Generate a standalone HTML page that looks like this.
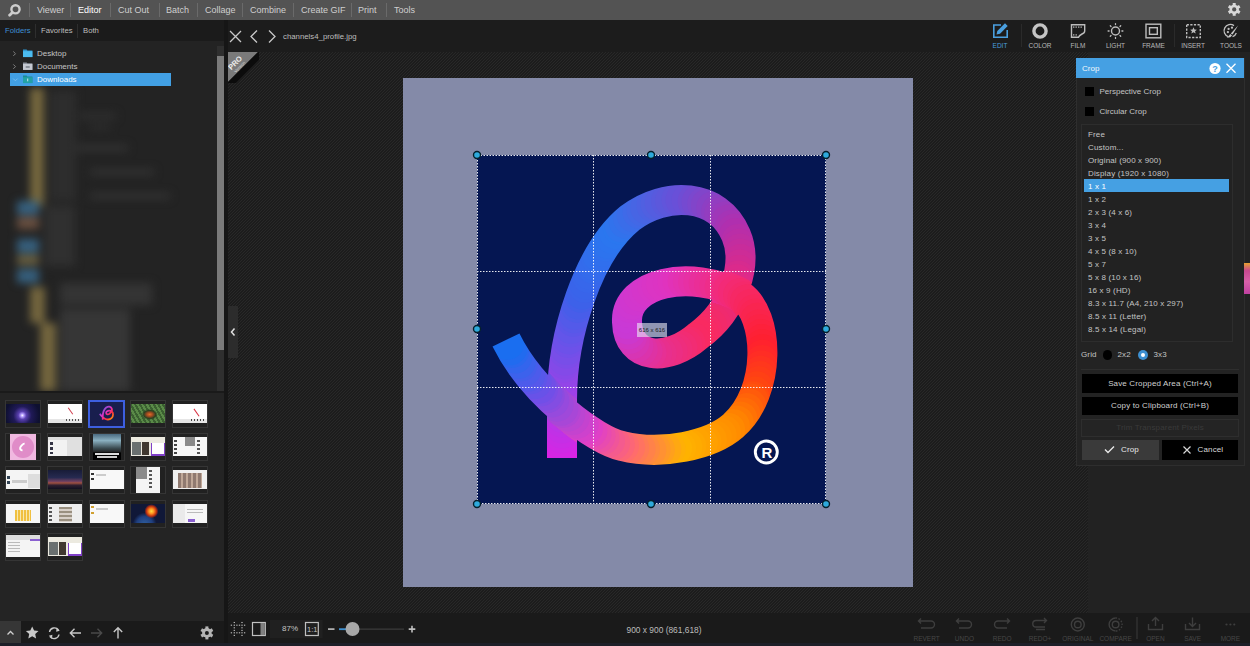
<!DOCTYPE html>
<html><head><meta charset="utf-8">
<style>
*{margin:0;padding:0;box-sizing:border-box}
html,body{width:1250px;height:646px;overflow:hidden;background:#1c1c1c;font-family:"Liberation Sans",sans-serif;}
.a{position:absolute}
.t{position:absolute;white-space:nowrap;line-height:1}
#menubar{left:0;top:0;width:1250px;height:20px;background:#535353}
.mi{font-size:9px;color:#cfcfcf;top:6px}
.sep{position:absolute;top:3px;width:1px;height:14px;background:#6a6a6a}
#tabs{left:0;top:20px;width:224px;height:21px;background:#1b1b1b}
#tree{left:0;top:41px;width:224px;height:351px;background:#232323}
#thumbs{left:0;top:393px;width:224px;height:228px;background:#242424}
#lbar{left:0;top:621px;width:224px;height:25px;background:#1a1a1a}
#gap{left:224px;top:20px;width:4px;height:626px;background:#161616}
#hdr{left:228px;top:20px;width:1022px;height:32px;background:#1c1c1c}
#canvas{left:228px;top:52px;width:860px;height:561px;background:#1c1c1c}
#rpanel{left:1088px;top:52px;width:162px;height:561px;background:#222}
#bbar{left:228px;top:613px;width:1022px;height:30px;background:#1a1a1a}
#bstrip{left:0;top:643px;width:1250px;height:3px;background:#1d1f28}
.cell{position:absolute;width:36px;height:28px;background:#2a2a2a;border:1px solid #303030}
.lbl{font-size:6.5px;color:#b8b8b8;top:43px;transform:translateX(-50%)}
.blbl{font-size:6.5px;color:#464646;top:636px;transform:translateX(-50%)}
#crop{left:1076px;top:58px;width:169px;height:408px;background:#232323;border:1px solid #303030}
.ci{font-size:8px;color:#c4c4c4;letter-spacing:0.15px}
</style></head><body>
<div id="menubar" class="a"></div>
<div id="tabs" class="a"></div>
<div id="tree" class="a"></div>
<div id="thumbs" class="a"></div>
<div id="lbar" class="a"></div>
<div id="gap" class="a"></div>
<div id="hdr" class="a"></div>
<div id="canvas" class="a"><svg width="860" height="561" style="display:block"><defs><pattern id="stp" patternUnits="userSpaceOnUse" width="3" height="3"><rect x="0" y="2" width="1" height="1" fill="#282828"/><rect x="1" y="1" width="1" height="1" fill="#282828"/><rect x="2" y="0" width="1" height="1" fill="#282828"/></pattern></defs><rect width="860" height="561" fill="url(#stp)" shape-rendering="crispEdges"/></svg></div>
<div id="rpanel" class="a"></div>
<div id="bbar" class="a"></div>


<!-- header -->
<svg class="a" style="left:229px;top:30.3px" width="50" height="14" viewBox="0 0 50 14">
 <g stroke="#c8c8c8" stroke-width="1.3" fill="none">
  <path d="M1 1 L12 12 M12 1 L1 12"/>
  <path d="M28 0.5 L22 6.5 L28 12.5"/>
  <path d="M40 0.5 L46 6.5 L40 12.5"/>
 </g>
</svg>
<div class="t" style="left:283px;top:33px;font-size:7.8px;color:#bdbdbd">channels4_profile.jpg</div>
<!-- tool icons -->
<svg class="a" style="left:985px;top:20px" width="265" height="32" viewBox="985 20 265 32">
 <g fill="none" stroke="#4a9fdf" stroke-width="1.6">
  <path d="M1001 25 H993.8 V37.2 H1007.2 V30"/>
 </g>
 <path d="M996.5 34.5 L997.3 31 L1005 23.3 L1007.7 26 L1000 33.7 Z" fill="#4a9fdf"/>
 <rect x="1021" y="24" width="1" height="23" fill="#2a2a2a"/>
 <circle cx="1040" cy="31" r="6.1" fill="none" stroke="#c4c4c4" stroke-width="3.4"/>
 <g fill="none" stroke="#bdbdbd" stroke-width="1.4">
  <path d="M1071.5 24.7 H1084.7 V31 Q1084.7 33 1082 34 Q1079 35.5 1078.5 37.3 H1071.5 Z"/>
 </g>
 <rect x="1146" y="24.2" width="14.8" height="13.6" fill="none" stroke="#bdbdbd" stroke-width="1.4"/>
 <rect x="1149.5" y="27.7" width="7.8" height="6.6" fill="none" stroke="#bdbdbd" stroke-width="1.4"/>
 <g fill="#bdbdbd">
  <rect x="1073" y="26.5" width="1.4" height="1.2"/><rect x="1075.5" y="26.5" width="1.4" height="1.2"/><rect x="1078" y="26.5" width="1.4" height="1.2"/><rect x="1080.5" y="26.5" width="1.4" height="1.2"/>
  <rect x="1073" y="34.3" width="1.4" height="1.2"/><rect x="1075.5" y="34.3" width="1.4" height="1.2"/>
 </g>
 <circle cx="1115.5" cy="31" r="4" fill="none" stroke="#bdbdbd" stroke-width="1.4"/>
 <g stroke="#bdbdbd" stroke-width="1.3" stroke-linecap="round">
  <path d="M1115.5 23.6 v1 M1115.5 37.4 v1 M1108.1 31 h1 M1121.9 31 h1 M1110.3 25.8 l0.7 0.7 M1120 35.5 l0.7 0.7 M1120.7 25.8 l-0.7 0.7 M1111 35.5 l-0.7 0.7"/>
 </g>
 <rect x="1174" y="24" width="1" height="23" fill="#2a2a2a"/>
 <rect x="1186.7" y="24.7" width="13.6" height="12.8" fill="none" stroke="#bdbdbd" stroke-width="1.4" stroke-dasharray="2.2 1.4"/>
 <path d="M1193.5 27.3 l1 2.3 2.4 0.1 -1.9 1.5 0.7 2.4 -2.2 -1.4 -2.2 1.4 0.7 -2.4 -1.9 -1.5 2.4 -0.1z" fill="#bdbdbd"/>
 <path d="M1234 25.64 A6.3 6.3 0 1 0 1228.25 36.72" fill="none" stroke="#c0c0c0" stroke-width="1.3"/>
 <path d="M1236.3 32.95 A6.3 6.3 0 0 1 1232.55 36.72" fill="none" stroke="#c0c0c0" stroke-width="1.3"/>
 <g fill="#c0c0c0"><circle cx="1228.6" cy="28.9" r="1.15"/><circle cx="1232" cy="27.7" r="1.15"/><circle cx="1227.9" cy="32.1" r="1.15"/></g>
 <path d="M1238.3 25.3 L1232.6 34.6 L1230.8 33.4 Z" fill="#c8c8c8"/>
 <path d="M1230.2 34 L1232 35.3 Q1231 37.8 1226.8 37.8 Q1228.6 36.6 1230.2 34 Z" fill="#c8c8c8"/>
</svg>
<div class="t lbl" style="left:1000px;color:#4a9fdf">EDIT</div>
<div class="t lbl" style="left:1040px">COLOR</div>
<div class="t lbl" style="left:1078px">FILM</div>
<div class="t lbl" style="left:1115.5px">LIGHT</div>
<div class="t lbl" style="left:1153.5px">FRAME</div>
<div class="t lbl" style="left:1193px">INSERT</div>
<div class="t lbl" style="left:1231px">TOOLS</div>
<!-- gear top right -->
<svg class="a" style="left:1224px;top:0px" width="22" height="20" viewBox="1224 0 22 20"><g transform="translate(1234.2 9.4)" fill="#d8d8d8"><circle r="4.7"/><rect x="-1.5" y="-6.4" width="3" height="3.4000000000000004" transform="rotate(0)"/><rect x="-1.5" y="-6.4" width="3" height="3.4000000000000004" transform="rotate(60)"/><rect x="-1.5" y="-6.4" width="3" height="3.4000000000000004" transform="rotate(120)"/><rect x="-1.5" y="-6.4" width="3" height="3.4000000000000004" transform="rotate(180)"/><rect x="-1.5" y="-6.4" width="3" height="3.4000000000000004" transform="rotate(240)"/><rect x="-1.5" y="-6.4" width="3" height="3.4000000000000004" transform="rotate(300)"/><circle r="2.1" fill="#535353"/></g></svg>


<!-- crop panel -->
<div class="a" style="left:1076px;top:58px;width:169px;height:408px;background:#232323;border:1px solid #2e2e2e;border-top:none"></div>
<div class="a" style="left:1076px;top:58px;width:168px;height:20px;background:#45a0e3"></div>
<div class="t" style="left:1082px;top:65px;font-size:8px;color:#f4f8fc">Crop</div>
<svg class="a" style="left:1208px;top:62px" width="30" height="13" viewBox="0 0 30 13">
 <circle cx="7" cy="6.5" r="5.6" fill="#fff"/>
 <text x="7" y="10" font-family="Liberation Sans" font-weight="bold" font-size="9" fill="#45a0e3" text-anchor="middle">?</text>
 <path d="M18.5 1.8 L27.5 10.8 M27.5 1.8 L18.5 10.8" stroke="#fff" stroke-width="1.3"/>
</svg>
<div class="a" style="left:1085px;top:87px;width:9px;height:9px;background:#000"></div>
<div class="t ci" style="left:1099.5px;top:87.5px;letter-spacing:0">Perspective Crop</div>
<div class="a" style="left:1085px;top:107px;width:9px;height:9px;background:#000"></div>
<div class="t ci" style="left:1099.5px;top:107.5px;letter-spacing:0">Circular Crop</div>
<div class="a" style="left:1081px;top:124px;width:152px;height:218px;border:1px solid #2d2d2d;background:#222"></div>
<div class="a" style="left:1084px;top:179px;width:145px;height:13px;background:#45a0e3"></div>
<div class="t ci" style="left:1088px;top:130.7px;color:#c4c4c4">Free</div>
<div class="t ci" style="left:1088px;top:143.7px;color:#c4c4c4">Custom...</div>
<div class="t ci" style="left:1088px;top:156.7px;color:#c4c4c4">Original (900 x 900)</div>
<div class="t ci" style="left:1088px;top:169.7px;color:#c4c4c4">Display (1920 x 1080)</div>
<div class="t ci" style="left:1088px;top:182.7px;color:#ffffff">1 x 1</div>
<div class="t ci" style="left:1088px;top:195.7px;color:#c4c4c4">1 x 2</div>
<div class="t ci" style="left:1088px;top:208.7px;color:#c4c4c4">2 x 3 (4 x 6)</div>
<div class="t ci" style="left:1088px;top:221.7px;color:#c4c4c4">3 x 4</div>
<div class="t ci" style="left:1088px;top:234.7px;color:#c4c4c4">3 x 5</div>
<div class="t ci" style="left:1088px;top:247.7px;color:#c4c4c4">4 x 5 (8 x 10)</div>
<div class="t ci" style="left:1088px;top:260.7px;color:#c4c4c4">5 x 7</div>
<div class="t ci" style="left:1088px;top:273.7px;color:#c4c4c4">5 x 8 (10 x 16)</div>
<div class="t ci" style="left:1088px;top:286.7px;color:#c4c4c4">16 x 9 (HD)</div>
<div class="t ci" style="left:1088px;top:299.7px;color:#c4c4c4">8.3 x 11.7 (A4, 210 x 297)</div>
<div class="t ci" style="left:1088px;top:312.7px;color:#c4c4c4">8.5 x 11 (Letter)</div>
<div class="t ci" style="left:1088px;top:325.7px;color:#c4c4c4">8.5 x 14 (Legal)</div>

<div class="t ci" style="left:1081px;top:351px">Grid</div>
<div class="a" style="left:1102.5px;top:350px;width:9.5px;height:9.5px;border-radius:50%;background:#000"></div>
<div class="t ci" style="left:1117.5px;top:351px">2x2</div>
<div class="a" style="left:1138px;top:350px;width:10px;height:10px;border-radius:50%;background:#3d8fd0"></div>
<div class="a" style="left:1141px;top:353px;width:4px;height:4px;border-radius:50%;background:#fff"></div>
<div class="t ci" style="left:1153.5px;top:351px">3x3</div>
<div class="a" style="left:1081px;top:369px;width:158px;height:1px;background:#2e2e2e"></div>
<div class="a" style="left:1082px;top:374px;width:156px;height:19px;background:#000"></div>
<div class="t ci" style="left:1160px;top:380px;transform:translateX(-50%);color:#d0d0d0">Save Cropped Area (Ctrl+A)</div>
<div class="a" style="left:1082px;top:396.5px;width:156px;height:18px;background:#000"></div>
<div class="t ci" style="left:1160px;top:402px;transform:translateX(-50%);color:#d0d0d0">Copy to Clipboard (Ctrl+B)</div>
<div class="a" style="left:1081px;top:418.5px;width:158px;height:18.5px;background:#242424;border:1px solid #2e2e2e"></div>
<div class="t ci" style="left:1160px;top:424px;transform:translateX(-50%);color:#3a3a3a">Trim Transparent Pixels</div>
<div class="a" style="left:1082px;top:440px;width:77px;height:19.5px;background:#3a3a3a"></div>
<svg class="a" style="left:1104px;top:445px" width="11" height="9"><path d="M1 4.5 L4 7.5 L10 1.5" fill="none" stroke="#e8e8e8" stroke-width="1.4"/></svg>
<div class="t ci" style="left:1121px;top:446px;color:#e8e8e8">Crop</div>
<div class="a" style="left:1162px;top:440px;width:76px;height:19.5px;background:#000"></div>
<svg class="a" style="left:1182px;top:445px" width="10" height="10"><path d="M1.5 1.5 L8.5 8.5 M8.5 1.5 L1.5 8.5" fill="none" stroke="#d8d8d8" stroke-width="1.2"/></svg>
<div class="t ci" style="left:1197.5px;top:446px;color:#d8d8d8">Cancel</div>
<div class="a" style="left:1244px;top:263px;width:6px;height:31px;background:linear-gradient(180deg,#e8a030 0%,#c84890 25%,#d860a8 60%,#c040a0 100%)"></div>

<!-- thumbnails -->
<div class="a" style="left:5px;top:400px;width:36px;height:28px;background:#212121;box-shadow:inset 0 0 0 1px #353535"><div class="a" style="left:1px;top:4px;width:34px;height:19px;background:radial-gradient(circle at 48% 60%,#ffffff 0px,#b8a0ff 1.5px,#5a40b0 4px,#201a58 9px,#0e1030 17px)"></div></div>
<div class="a" style="left:47px;top:400px;width:36px;height:28px;background:#212121;box-shadow:inset 0 0 0 1px #353535"><div class="a" style="left:1px;top:4px;width:34px;height:19px;background:linear-gradient(180deg,#fff 0%,#fff 80%,#e6e6e6 80%)"><div class="a" style="left:22px;top:3px;width:1px;height:8px;background:#d04050;transform:rotate(-35deg)"></div><div class="a" style="left:18px;top:15px;width:14px;height:1.5px;background:repeating-linear-gradient(90deg,#555 0 1.5px,transparent 1.5px 3px)"></div></div></div>
<div class="a" style="left:89px;top:400px;width:36px;height:28px;background:#212121;box-shadow:inset 0 0 0 1px #353535"><div class="a" style="left:-0.7px;top:-0.1px;width:37px;height:28px;border:2.8px solid #3d5fe0;background:#181e4e"></div><svg class="a" style="left:9px;top:4px" width="18" height="18" viewBox="470 150 350 350"><defs><linearGradient id="tg" x1="0" y1="0" x2="1" y2="1"><stop offset="0" stop-color="#3070f0"/><stop offset="0.45" stop-color="#e030c0"/><stop offset="0.7" stop-color="#ff3040"/><stop offset="1" stop-color="#ffb000"/></linearGradient></defs><path d="M562 458 L562 400 C562 335 588 252 630 218 C665.7 191 718 192.5 736 235 C748 263 735 309 698 336 C668 362 628 360 627 322 C625 283 690 268 740 295 C770 315 772 392 733 426 C711 445 662 456 622 446 C595 439 528 380 506 340" fill="none" stroke="url(#tg)" stroke-width="34"/></svg></div>
<div class="a" style="left:130px;top:400px;width:36px;height:28px;background:#212121;box-shadow:inset 0 0 0 1px #353535"><div class="a" style="left:1px;top:4px;width:34px;height:19px;background:radial-gradient(ellipse 9px 6px at 55% 55%,#e07028 0px,#a04a20 3px,#2a4020 6px,transparent 8px),repeating-linear-gradient(60deg,#3a6030 0 2px,#5a8a48 2px 4px)"></div></div>
<div class="a" style="left:172px;top:400px;width:36px;height:28px;background:#212121;box-shadow:inset 0 0 0 1px #353535"><div class="a" style="left:1px;top:4px;width:34px;height:19px;background:linear-gradient(180deg,#fff 0%,#fff 80%,#e6e6e6 80%)"><div class="a" style="left:23px;top:4px;width:1.2px;height:9px;background:#d83040;transform:rotate(-35deg)"></div><div class="a" style="left:18px;top:15px;width:15px;height:1.5px;background:repeating-linear-gradient(90deg,#444 0 1.5px,transparent 1.5px 3px)"></div></div></div>
<div class="a" style="left:5px;top:433px;width:36px;height:28px;background:#212121;box-shadow:inset 0 0 0 1px #353535"><div class="a" style="left:5px;top:1px;width:26px;height:26px;background:#f0b8e0"></div><div class="a" style="left:7px;top:3px;width:22px;height:22px;border-radius:50%;background:#e08cc8"></div><div class="a" style="left:15px;top:9px;width:7px;height:10px;border-radius:50%;border:2px solid #fff;border-right-color:transparent;border-top-color:transparent;transform:rotate(45deg)"></div></div>
<div class="a" style="left:47px;top:433px;width:36px;height:28px;background:#212121;box-shadow:inset 0 0 0 1px #353535"><div class="a" style="left:1px;top:4px;width:34px;height:19px;background:linear-gradient(90deg,#f2f2f2 0%,#f2f2f2 55%,#e0e0e0 55%)"><div class="a" style="left:2px;top:5px;width:3px;height:12px;background:repeating-linear-gradient(180deg,#334 0 3px,transparent 3px 5px)"></div><div class="a" style="left:0;top:0;width:34px;height:3px;background:#ddd"></div></div></div>
<div class="a" style="left:89px;top:433px;width:36px;height:28px;background:#212121;box-shadow:inset 0 0 0 1px #353535"><div class="a" style="left:4px;top:1px;width:28px;height:26px;background:linear-gradient(180deg,#4a6a80 0%,#8ab0c0 25%,#3a4a50 55%,#222 70%,#000 72%)"></div><div class="a" style="left:6px;top:20px;width:24px;height:1.5px;background:#ddd"></div><div class="a" style="left:8px;top:23px;width:20px;height:1.5px;background:#ccc"></div></div>
<div class="a" style="left:130px;top:433px;width:36px;height:28px;background:#212121;box-shadow:inset 0 0 0 1px #353535"><div class="a" style="left:1px;top:4px;width:34px;height:19px;background:#eceae0"><div class="a" style="left:1px;top:5px;width:9px;height:13px;background:#6a7070"></div><div class="a" style="left:11px;top:5px;width:7px;height:13px;background:#403830"></div><div class="a" style="left:20px;top:6px;width:14px;height:13px;background:#8040c8"></div><div class="a" style="left:21px;top:6px;width:12px;height:11px;background:#fff"></div></div></div>
<div class="a" style="left:172px;top:433px;width:36px;height:28px;background:#212121;box-shadow:inset 0 0 0 1px #353535"><div class="a" style="left:1px;top:4px;width:34px;height:19px;background:#f6f6f6"><div class="a" style="left:12px;top:0;width:10px;height:9px;background:#8a8a8a"></div><div class="a" style="left:1px;top:3px;width:3px;height:14px;background:repeating-linear-gradient(180deg,#444 0 2px,transparent 2px 4px)"></div><div class="a" style="left:24px;top:3px;width:3px;height:14px;background:repeating-linear-gradient(180deg,#555 0 2px,transparent 2px 4px)"></div></div></div>
<div class="a" style="left:5px;top:466px;width:36px;height:28px;background:#212121;box-shadow:inset 0 0 0 1px #353535"><div class="a" style="left:1px;top:4px;width:34px;height:19px;background:#f4f4f4"><div class="a" style="left:22px;top:4px;width:12px;height:14px;background:#ddd"></div><div class="a" style="left:1px;top:6px;width:3px;height:10px;background:repeating-linear-gradient(180deg,#345 0 3px,transparent 3px 5px)"></div><div class="a" style="left:6px;top:10px;width:15px;height:3px;background:#ccc"></div></div></div>
<div class="a" style="left:47px;top:466px;width:36px;height:28px;background:#212121;box-shadow:inset 0 0 0 1px #353535"><div class="a" style="left:1px;top:4px;width:34px;height:19px;background:linear-gradient(180deg,#181c38 0%,#262a50 40%,#704060 60%,#a05040 68%,#302030 80%,#101020 100%)"></div></div>
<div class="a" style="left:89px;top:466px;width:36px;height:28px;background:#212121;box-shadow:inset 0 0 0 1px #353535"><div class="a" style="left:1px;top:4px;width:34px;height:19px;background:#f8f8f8"><div class="a" style="left:1px;top:3px;width:3px;height:10px;background:repeating-linear-gradient(180deg,#333 0 2.5px,transparent 2.5px 5px)"></div><div class="a" style="left:6px;top:4px;width:10px;height:2px;background:#ccc"></div></div></div>
<div class="a" style="left:130px;top:466px;width:36px;height:28px;background:#212121;box-shadow:inset 0 0 0 1px #353535"><div class="a" style="left:6px;top:1px;width:24px;height:26px;background:#f4f4f4"></div><div class="a" style="left:6px;top:1px;width:11px;height:12px;background:#8a8a8a"></div><div class="a" style="left:19px;top:4px;width:3px;height:20px;background:repeating-linear-gradient(180deg,#555 0 2px,transparent 2px 4px)"></div></div>
<div class="a" style="left:172px;top:466px;width:36px;height:28px;background:#212121;box-shadow:inset 0 0 0 1px #353535"><div class="a" style="left:1px;top:4px;width:34px;height:19px;background:#f0f0f0"><div class="a" style="left:5px;top:3px;width:24px;height:15px;background:repeating-linear-gradient(90deg,#907a70 0 3px,#c0a898 3px 5px)"></div></div></div>
<div class="a" style="left:5px;top:499.5px;width:36px;height:28px;background:#212121;box-shadow:inset 0 0 0 1px #353535"><div class="a" style="left:1px;top:4px;width:34px;height:19px;background:#f6f6f6"><div class="a" style="left:9px;top:6px;width:16px;height:11px;background:repeating-linear-gradient(90deg,#f0c040 0 2px,#f8e8b0 2px 3px)"></div></div></div>
<div class="a" style="left:47px;top:499.5px;width:36px;height:28px;background:#212121;box-shadow:inset 0 0 0 1px #353535"><div class="a" style="left:1px;top:4px;width:34px;height:19px;background:#eeeeee"><div class="a" style="left:11px;top:3px;width:13px;height:15px;background:repeating-linear-gradient(180deg,#9a9080 0 2px,#d8d0c8 2px 4px)"></div><div class="a" style="left:1px;top:3px;width:3px;height:14px;background:repeating-linear-gradient(180deg,#555 0 2px,transparent 2px 4px)"></div></div></div>
<div class="a" style="left:89px;top:499.5px;width:36px;height:28px;background:#212121;box-shadow:inset 0 0 0 1px #353535"><div class="a" style="left:1px;top:4px;width:34px;height:19px;background:#f8f8f8"><div class="a" style="left:1px;top:2px;width:3px;height:12px;background:repeating-linear-gradient(180deg,#d0a030 0 2.5px,transparent 2.5px 6px)"></div><div class="a" style="left:6px;top:4px;width:12px;height:2px;background:#ccc"></div></div></div>
<div class="a" style="left:130px;top:499.5px;width:36px;height:28px;background:#212121;box-shadow:inset 0 0 0 1px #353535"><div class="a" style="left:1px;top:4px;width:34px;height:19px;background:radial-gradient(circle at 60% 38%,#ffe040 0px,#ff9020 2.5px,#c03010 5px,transparent 7px),radial-gradient(ellipse at 40% 110%,#3060a0 0px,#204080 8px,transparent 12px),#101838"></div></div>
<div class="a" style="left:172px;top:499.5px;width:36px;height:28px;background:#212121;box-shadow:inset 0 0 0 1px #353535"><div class="a" style="left:1px;top:4px;width:34px;height:19px;background:#f6f6f6"><div class="a" style="left:0;top:0;width:12px;height:19px;background:#eaeaea"></div><div class="a" style="left:15px;top:15px;width:7px;height:3px;background:#8a60d0"></div><div class="a" style="left:14px;top:5px;width:16px;height:6px;background:repeating-linear-gradient(180deg,#bbb 0 1px,transparent 1px 3px)"></div></div></div>
<div class="a" style="left:5px;top:532.5px;width:36px;height:28px;background:#212121;box-shadow:inset 0 0 0 1px #353535"><div class="a" style="left:1px;top:4px;width:34px;height:19px;background:#f4f4f4;top:2px;height:22px"><div class="a" style="left:0;top:0;width:34px;height:5px;background:#ddd"></div><div class="a" style="left:24px;top:4px;width:10px;height:2px;background:#8a60d0"></div><div class="a" style="left:2px;top:7px;width:12px;height:10px;background:repeating-linear-gradient(180deg,#bbb 0 1px,transparent 1px 3px)"></div></div></div>
<div class="a" style="left:47px;top:532.5px;width:36px;height:28px;background:#212121;box-shadow:inset 0 0 0 1px #353535"><div class="a" style="left:1px;top:4px;width:34px;height:19px;background:#eceae0"><div class="a" style="left:1px;top:5px;width:9px;height:13px;background:#6a7070"></div><div class="a" style="left:11px;top:5px;width:7px;height:13px;background:#403830"></div><div class="a" style="left:20px;top:6px;width:14px;height:13px;background:#8040c8"></div><div class="a" style="left:21px;top:6px;width:12px;height:11px;background:#fff"></div></div></div>


<!-- left bottom toolbar -->
<div class="a" style="left:0;top:621px;width:21px;height:25px;background:#363636"></div>
<svg class="a" style="left:0;top:621px" width="224" height="25" viewBox="0 621 224 25">
 <path d="M7.5 634.5 L10.5 631.5 L13.5 634.5" fill="none" stroke="#cfcfcf" stroke-width="1.3"/>
 <path d="M32.2 626.5 L34.1 630.6 L38.5 631 L35.2 634 L36.1 638.4 L32.2 636.2 L28.3 638.4 L29.2 634 L25.9 631 L30.3 630.6 Z" fill="#c8c8c8"/>
 <g fill="none" stroke="#c8c8c8" stroke-width="1.4">
  <path d="M49.5 632 A5 5 0 0 1 58.5 630"/><path d="M59 634.5 A5 5 0 0 1 50 636.5"/>
 </g>
 <path d="M56.5 628 L59.8 630.8 L56.2 631.8 Z M52 638.5 L48.8 635.8 L52.4 634.8 Z" fill="#c8c8c8"/>
 <path d="M81 633 H70.5 M74.5 628.8 L70.3 633 L74.5 637.2" fill="none" stroke="#c8c8c8" stroke-width="1.4"/>
 <path d="M91 633 H101.5 M97.5 628.8 L101.7 633 L97.5 637.2" fill="none" stroke="#4a4a4a" stroke-width="1.4"/>
 <path d="M118 638.5 V627.8 M113.8 632 L118 627.8 L122.2 632" fill="none" stroke="#c8c8c8" stroke-width="1.4"/>
<g transform="translate(206.9 632.9)" fill="#b4b4b4"><circle r="4.8"/><rect x="-1.5" y="-6.5" width="3" height="3.5" transform="rotate(0)"/><rect x="-1.5" y="-6.5" width="3" height="3.5" transform="rotate(60)"/><rect x="-1.5" y="-6.5" width="3" height="3.5" transform="rotate(120)"/><rect x="-1.5" y="-6.5" width="3" height="3.5" transform="rotate(180)"/><rect x="-1.5" y="-6.5" width="3" height="3.5" transform="rotate(240)"/><rect x="-1.5" y="-6.5" width="3" height="3.5" transform="rotate(300)"/><circle r="2.0" fill="#1a1a1a"/></g>
</svg>
<!-- main bottom bar -->
<svg class="a" style="left:228px;top:613px" width="200" height="30" viewBox="228 613 200 30">
 <g fill="#bdbdbd"><rect x="230.75" y="624.65" width="1.3" height="1.1"/><rect x="230.75" y="632.25" width="1.3" height="1.1"/><rect x="233.65" y="621.95" width="1.3" height="1.1"/><rect x="233.65" y="624.65" width="1.3" height="1.1"/><rect x="233.65" y="627.25" width="1.3" height="1.1"/><rect x="233.65" y="629.85" width="1.3" height="1.1"/><rect x="233.65" y="632.25" width="1.3" height="1.1"/><rect x="233.65" y="634.85" width="1.3" height="1.1"/><rect x="236.25" y="624.65" width="1.3" height="1.1"/><rect x="236.25" y="632.25" width="1.3" height="1.1"/><rect x="238.85" y="624.65" width="1.3" height="1.1"/><rect x="238.85" y="632.25" width="1.3" height="1.1"/><rect x="241.35" y="621.95" width="1.3" height="1.1"/><rect x="241.35" y="624.65" width="1.3" height="1.1"/><rect x="241.35" y="627.25" width="1.3" height="1.1"/><rect x="241.35" y="629.85" width="1.3" height="1.1"/><rect x="241.35" y="632.25" width="1.3" height="1.1"/><rect x="241.35" y="634.85" width="1.3" height="1.1"/><rect x="243.95" y="624.65" width="1.3" height="1.1"/><rect x="243.95" y="632.25" width="1.3" height="1.1"/></g>
 <rect x="252.5" y="622.5" width="12.8" height="13" fill="none" stroke="#c0c0c0" stroke-width="1.2"/>
 <rect x="260.5" y="623" width="4.3" height="12" fill="#808080"/>
 <rect x="270" y="620" width="52.5" height="18" fill="#202020"/>
 <rect x="305.5" y="622.5" width="12.8" height="13" fill="none" stroke="#c0c0c0" stroke-width="1.2"/>
 <rect x="328" y="628.3" width="6.5" height="1.6" fill="#c0c0c0"/>
 <rect x="339" y="628.5" width="65" height="1.3" fill="#3a3a3a"/>
 <rect x="339" y="628.3" width="10" height="1.8" fill="#3d8fd0"/>
 <circle cx="352.5" cy="629" r="7" fill="#a8a8a8"/>
 <path d="M408.7 629.1 H415.3 M412 625.8 V632.4" stroke="#c0c0c0" stroke-width="1.6"/>
</svg>
<div class="t" style="left:282px;top:625px;font-size:8px;color:#c4c4c4">87%</div>
<div class="t" style="left:307px;top:625.5px;font-size:7.5px;color:#c4c4c4">1:1</div>
<div class="t" style="left:664px;top:625.5px;font-size:8.4px;color:#bcbcbc;transform:translateX(-50%)">900 x 900 (861,618)</div>
<svg class="a" style="left:900px;top:613px" width="350" height="30" viewBox="900 613 350 30">
 <g fill="none" stroke="#3e3e3e" stroke-width="1.4">
  <path d="M921 618.5 L918.5 621 L921 623.5 M919 621 H931 A3.5 3.5 0 0 1 931 628 H921"/>
  <path d="M959 618.5 L956.5 621 L959 623.5 M957 621 H968 A3.5 3.5 0 0 1 968 628 H959"/>
  <path d="M1007 618.5 L1009.5 621 L1007 623.5 M1009 621 H998 A3.5 3.5 0 0 0 998 628 H1007"/>
  <path d="M1044 618 L1046.5 620.5 L1044 623 M1046 620.5 H1036 A3.2 3.2 0 0 0 1036 627 H1045 M1036 629.5 H1045"/>
  <circle cx="1077.8" cy="624.5" r="6.5"/><circle cx="1077.8" cy="624.5" r="3.3"/>
  <path d="M1115.6 618 A6.5 6.5 0 0 0 1115.6 631" /><path d="M1115.6 618 A6.5 6.5 0 0 1 1115.6 631" stroke-dasharray="1.5 1.5"/><circle cx="1115.6" cy="624.5" r="3.3"/>
  <path d="M1148.5 624 V629.5 H1162.5 V624 M1155.5 626 V617.5 M1152 621 L1155.5 617.5 L1159 621"/>
  <path d="M1185.5 624 V629.5 H1199.5 V624 M1192.5 617.5 V626.5 M1189 623 L1192.5 626.5 L1196 623"/>
 </g>
 <rect x="1136.5" y="617" width="1" height="22" fill="#3a3a3a"/>
 <g fill="#3e3e3e"><circle cx="1226.5" cy="624.5" r="1.1"/><circle cx="1230.4" cy="624.5" r="1.1"/><circle cx="1234.3" cy="624.5" r="1.1"/></g>
</svg>
<div class="t blbl" style="left:926.6px">REVERT</div>
<div class="t blbl" style="left:964.4px">UNDO</div>
<div class="t blbl" style="left:1002.2px">REDO</div>
<div class="t blbl" style="left:1040px">REDO+</div>
<div class="t blbl" style="left:1077.8px">ORIGINAL</div>
<div class="t blbl" style="left:1115.6px">COMPARE</div>
<div class="t blbl" style="left:1155.4px">OPEN</div>
<div class="t blbl" style="left:1192.6px">SAVE</div>
<div class="t blbl" style="left:1230.4px">MORE</div>
<div class="a" style="left:228px;top:305.5px;width:10px;height:52.5px;background:#2c2c2c;border-radius:1px"></div>
<svg class="a" style="left:228px;top:326px" width="10" height="12"><path d="M6.5 2.5 L3.5 6 L6.5 9.5" fill="none" stroke="#e0e0e0" stroke-width="1.5"/></svg>

<!-- PRO ribbon -->
<svg class="a" style="left:228px;top:52px" width="32" height="32" viewBox="0 0 32 32">
<path d="M0 0 H30 L0 30 Z" fill="#7a7a7a"/>
<path d="M30 0 L31 0 L31 8 L8 31 L0 31 L0 30 Z" fill="#0c0c0c"/>
<text x="0" y="0" transform="translate(9,12.5) rotate(-45)" font-family="Liberation Sans" font-size="7.5" font-weight="bold" fill="#eee" text-anchor="middle">PRO</text>
<text x="0" y="0" transform="translate(12.8,16) rotate(-45)" font-family="Liberation Sans" font-size="4.2" fill="#ddd" text-anchor="middle">Version</text>
</svg>
<!-- image -->
<div class="a" style="left:403px;top:78px;width:510px;height:509px;background:#848aa8"></div>
<div class="a" style="left:477px;top:155px;width:349px;height:349px;background:#051652;overflow:hidden">
<svg class="a" style="left:-477px;top:-155px" width="1250" height="646" viewBox="0 0 1250 646">
<defs><mask id="lm" maskUnits="userSpaceOnUse" x="400" y="100" width="500" height="500"><path d="M562 458 L562 400 C562 335 588 252 630 218 C665.7 191 718 192.5 736 235 C748 263 735 309 698 336 C668 362 628 360 627 322 C625 283 690 268 740 295 C770 315 772 392 733 426 C711 445 662 456 622 446 C597 441 533 395 506 340" fill="none" stroke="#fff" stroke-width="30"/></mask></defs>
<g mask="url(#lm)" fill="none" stroke-width="34" stroke-linecap="round">
<path d="M562.0 458.0 L562.0 457.0 L562.0 456.0 L562.0 455.1 L562.0 454.1 L562.0 453.1 L562.0 452.1 L562.0 451.1 L562.0 450.1 L562.0 449.2 L562.0 448.2 L562.0 447.2" stroke="#e41ee4"/>
<path d="M562.0 452.1 L562.0 451.1 L562.0 450.1 L562.0 449.2 L562.0 448.2 L562.0 447.2 L562.0 446.2 L562.0 445.2 L562.0 444.2 L562.0 443.3 L562.0 442.3" stroke="#df20e4"/>
<path d="M562.0 447.2 L562.0 446.2 L562.0 445.2 L562.0 444.2 L562.0 443.3 L562.0 442.3 L562.0 441.3 L562.0 440.3 L562.0 439.3 L562.0 438.3 L562.0 437.4 L562.0 436.4" stroke="#da23e4"/>
<path d="M562.0 442.3 L562.0 441.3 L562.0 440.3 L562.0 439.3 L562.0 438.3 L562.0 437.4 L562.0 436.4 L562.0 435.4 L562.0 434.4 L562.0 433.4 L562.0 432.4 L562.0 431.5" stroke="#d526e5"/>
<path d="M562.0 436.4 L562.0 435.4 L562.0 434.4 L562.0 433.4 L562.0 432.4 L562.0 431.5 L562.0 430.5 L562.0 429.5 L562.0 428.5 L562.0 427.5 L562.0 426.5" stroke="#d029e5"/>
<path d="M562.0 431.5 L562.0 430.5 L562.0 429.5 L562.0 428.5 L562.0 427.5 L562.0 426.5 L562.0 425.6 L562.0 424.6 L562.0 423.6 L562.0 422.6 L562.0 421.6 L562.0 420.6" stroke="#cb2ce5"/>
<path d="M562.0 426.5 L562.0 425.6 L562.0 424.6 L562.0 423.6 L562.0 422.6 L562.0 421.6 L562.0 420.6 L562.0 419.7 L562.0 418.7 L562.0 417.7 L562.0 416.7 L562.0 415.7" stroke="#c62ee6"/>
<path d="M562.0 420.6 L562.0 419.7 L562.0 418.7 L562.0 417.7 L562.0 416.7 L562.0 415.7 L562.0 414.7 L562.0 413.8 L562.0 412.8 L562.0 411.8 L562.0 410.8" stroke="#c131e6"/>
<path d="M562.0 415.7 L562.0 414.7 L562.0 413.8 L562.0 412.8 L562.0 411.8 L562.0 410.8 L562.0 409.8 L562.0 408.8 L562.0 407.9 L562.0 406.9 L562.0 405.9 L562.0 404.9" stroke="#bc34e7"/>
<path d="M562.0 410.8 L562.0 409.8 L562.0 408.8 L562.0 407.9 L562.0 406.9 L562.0 405.9 L562.0 404.9 L562.0 403.9 L562.0 402.9 L562.0 402.0 L562.0 401.0 L562.0 400.0" stroke="#b737e7"/>
<path d="M562.0 404.9 L562.0 403.9 L562.0 402.9 L562.0 402.0 L562.0 401.0 L562.0 400.0 L562.0 396.7 L562.1 393.3" stroke="#b23ae7"/>
<path d="M562.0 400.0 L562.0 396.7 L562.1 393.3 L562.2 390.0" stroke="#ad3ce8"/>
<path d="M562.1 393.3 L562.2 390.0 L562.4 386.6 L562.6 383.1" stroke="#a83ee8"/>
<path d="M562.2 390.0 L562.4 386.6 L562.6 383.1 L562.8 379.7 L563.1 376.2" stroke="#a340e8"/>
<path d="M562.6 383.1 L562.8 379.7 L563.1 376.2 L563.4 372.7" stroke="#9d41e8"/>
<path d="M563.1 376.2 L563.4 372.7 L563.8 369.2 L564.2 365.7" stroke="#9843e8"/>
<path d="M563.4 372.7 L563.8 369.2 L564.2 365.7 L564.6 362.2" stroke="#9345e8"/>
<path d="M564.2 365.7 L564.6 362.2 L565.1 358.7" stroke="#8d47e8"/>
<path d="M564.6 362.2 L565.1 358.7 L565.7 355.1 L566.3 351.6" stroke="#8848e8"/>
<path d="M565.1 358.7 L565.7 355.1 L566.3 351.6 L566.9 348.0" stroke="#834ae8"/>
<path d="M566.3 351.6 L566.9 348.0 L567.5 344.5 L568.2 340.9" stroke="#7d4ce8"/>
<path d="M566.9 348.0 L567.5 344.5 L568.2 340.9 L569.0 337.4" stroke="#784ee8"/>
<path d="M568.2 340.9 L569.0 337.4 L569.8 333.8 L570.6 330.3" stroke="#734fe9"/>
<path d="M569.0 337.4 L569.8 333.8 L570.6 330.3 L571.4 326.8" stroke="#6d51e9"/>
<path d="M570.6 330.3 L571.4 326.8 L572.3 323.3 L573.3 319.7" stroke="#6853e9"/>
<path d="M571.4 326.8 L572.3 323.3 L573.3 319.7 L574.2 316.3" stroke="#6355e9"/>
<path d="M573.3 319.7 L574.2 316.3 L575.2 312.8" stroke="#5d56e9"/>
<path d="M574.2 316.3 L575.2 312.8 L576.3 309.3 L577.4 305.9" stroke="#5858e9"/>
<path d="M575.2 312.8 L576.3 309.3 L577.4 305.9 L578.5 302.5" stroke="#535ae9"/>
<path d="M577.4 305.9 L578.5 302.5 L579.7 299.1 L580.9 295.7" stroke="#4d5ce9"/>
<path d="M578.5 302.5 L579.7 299.1 L580.9 295.7 L582.1 292.4" stroke="#485de9"/>
<path d="M580.9 295.7 L582.1 292.4 L583.3 289.0 L584.7 285.8" stroke="#425fe9"/>
<path d="M582.1 292.4 L583.3 289.0 L584.7 285.8 L586.0 282.5" stroke="#3d61e9"/>
<path d="M584.7 285.8 L586.0 282.5 L587.4 279.3 L588.8 276.1" stroke="#3b63ea"/>
<path d="M586.0 282.5 L587.4 279.3 L588.8 276.1 L590.2 273.0" stroke="#3964ea"/>
<path d="M588.8 276.1 L590.2 273.0 L591.7 269.9 L593.2 266.9" stroke="#3866eb"/>
<path d="M590.2 273.0 L591.7 269.9 L593.2 266.9 L594.7 263.9" stroke="#3767eb"/>
<path d="M593.2 266.9 L594.7 263.9 L596.3 260.9 L597.9 258.0" stroke="#3569ec"/>
<path d="M594.7 263.9 L596.3 260.9 L597.9 258.0 L599.6 255.1" stroke="#346bec"/>
<path d="M597.9 258.0 L599.6 255.1 L601.2 252.3 L602.9 249.6" stroke="#336cec"/>
<path d="M599.6 255.1 L601.2 252.3 L602.9 249.6 L604.7 246.9 L606.4 244.3" stroke="#316eed"/>
<path d="M602.9 249.6 L604.7 246.9 L606.4 244.3 L608.2 241.7" stroke="#306fed"/>
<path d="M606.4 244.3 L608.2 241.7 L610.1 239.2 L611.9 236.7" stroke="#2f71ee"/>
<path d="M608.2 241.7 L610.1 239.2 L611.9 236.7 L613.8 234.4 L615.7 232.1" stroke="#2d73ee"/>
<path d="M611.9 236.7 L613.8 234.4 L615.7 232.1 L617.7 229.8 L619.7 227.7" stroke="#2c74ef"/>
<path d="M615.7 232.1 L617.7 229.8 L619.7 227.7 L621.7 225.6" stroke="#2b76ef"/>
<path d="M619.7 227.7 L621.7 225.6 L623.7 223.6 L625.8 221.6" stroke="#2a77ef"/>
<path d="M621.7 225.6 L623.7 223.6 L625.8 221.6 L627.9 219.8 L630.0 218.0" stroke="#2e75ee"/>
<path d="M625.8 221.6 L627.9 219.8 L630.0 218.0 L631.8 216.7 L633.7 215.4" stroke="#3272ec"/>
<path d="M630.0 218.0 L631.8 216.7 L633.7 215.4 L635.6 214.1 L637.5 212.9 L639.4 211.8" stroke="#3670eb"/>
<path d="M633.7 215.4 L635.6 214.1 L637.5 212.9 L639.4 211.8 L641.4 210.7 L643.3 209.6" stroke="#3a6de9"/>
<path d="M639.4 211.8 L641.4 210.7 L643.3 209.6 L645.3 208.6 L647.3 207.7" stroke="#3f6ae8"/>
<path d="M643.3 209.6 L645.3 208.6 L647.3 207.7 L649.3 206.8 L651.4 206.0 L653.4 205.2" stroke="#4368e6"/>
<path d="M647.3 207.7 L649.3 206.8 L651.4 206.0 L653.4 205.2 L655.5 204.4 L657.5 203.8" stroke="#4765e4"/>
<path d="M653.4 205.2 L655.5 204.4 L657.5 203.8 L659.6 203.1 L661.7 202.6" stroke="#4b62e3"/>
<path d="M657.5 203.8 L659.6 203.1 L661.7 202.6 L663.8 202.1 L665.9 201.6 L668.0 201.2" stroke="#5060e1"/>
<path d="M661.7 202.6 L663.8 202.1 L665.9 201.6 L668.0 201.2 L670.0 200.9 L672.1 200.6" stroke="#545de0"/>
<path d="M668.0 201.2 L670.0 200.9 L672.1 200.6 L674.2 200.3 L676.3 200.2 L678.4 200.0" stroke="#585ade"/>
<path d="M672.1 200.6 L674.2 200.3 L676.3 200.2 L678.4 200.0 L680.5 200.0 L682.5 200.0" stroke="#5c58dc"/>
<path d="M678.4 200.0 L680.5 200.0 L682.5 200.0 L684.6 200.0 L686.6 200.2 L688.6 200.3" stroke="#6155db"/>
<path d="M682.5 200.0 L684.6 200.0 L686.6 200.2 L688.6 200.3 L690.6 200.6 L692.6 200.9 L694.6 201.2" stroke="#6552d9"/>
<path d="M688.6 200.3 L690.6 200.6 L692.6 200.9 L694.6 201.2 L696.6 201.6 L698.5 202.1" stroke="#6950d8"/>
<path d="M694.6 201.2 L696.6 201.6 L698.5 202.1 L700.4 202.6 L702.3 203.2 L704.2 203.9" stroke="#6f4dd4"/>
<path d="M698.5 202.1 L700.4 202.6 L702.3 203.2 L704.2 203.9 L706.0 204.6 L707.9 205.4" stroke="#754ad1"/>
<path d="M704.2 203.9 L706.0 204.6 L707.9 205.4 L709.6 206.3 L711.4 207.2 L713.1 208.2" stroke="#7b48ce"/>
<path d="M707.9 205.4 L709.6 206.3 L711.4 207.2 L713.1 208.2 L714.8 209.2 L716.5 210.3 L718.1 211.5" stroke="#8145ca"/>
<path d="M713.1 208.2 L714.8 209.2 L716.5 210.3 L718.1 211.5 L719.7 212.7 L721.2 214.1" stroke="#8742c7"/>
<path d="M718.1 211.5 L719.7 212.7 L721.2 214.1 L722.7 215.4 L724.1 216.9 L725.5 218.4" stroke="#8d3fc3"/>
<path d="M721.2 214.1 L722.7 215.4 L724.1 216.9 L725.5 218.4 L726.9 219.9 L728.2 221.6" stroke="#933dc0"/>
<path d="M725.5 218.4 L726.9 219.9 L728.2 221.6 L729.5 223.3 L730.7 225.1 L731.9 226.9" stroke="#993abd"/>
<path d="M728.2 221.6 L729.5 223.3 L730.7 225.1 L731.9 226.9 L733.0 228.8 L734.1 230.8" stroke="#9f37b9"/>
<path d="M731.9 226.9 L733.0 228.8 L734.1 230.8 L735.1 232.9 L736.0 235.0" stroke="#a534b6"/>
<path d="M734.1 230.8 L735.1 232.9 L736.0 235.0 L736.6 236.4 L737.1 237.9 L737.6 239.4 L738.1 240.9" stroke="#ab32b2"/>
<path d="M736.0 235.0 L736.6 236.4 L737.1 237.9 L737.6 239.4 L738.1 240.9 L738.5 242.5 L738.9 244.1 L739.2 245.7" stroke="#b02faf"/>
<path d="M738.1 240.9 L738.5 242.5 L738.9 244.1 L739.2 245.7 L739.5 247.3 L739.7 248.9 L740.0 250.6" stroke="#b52fab"/>
<path d="M739.2 245.7 L739.5 247.3 L739.7 248.9 L740.0 250.6 L740.1 252.3 L740.2 254.0 L740.3 255.7" stroke="#ba2ea7"/>
<path d="M740.0 250.6 L740.1 252.3 L740.2 254.0 L740.3 255.7 L740.3 257.5 L740.3 259.2 L740.3 261.0" stroke="#be2ea3"/>
<path d="M740.3 255.7 L740.3 257.5 L740.3 259.2 L740.3 261.0 L740.2 262.8 L740.0 264.6 L739.8 266.4" stroke="#c32d9f"/>
<path d="M740.3 261.0 L740.2 262.8 L740.0 264.6 L739.8 266.4 L739.6 268.2 L739.4 270.1 L739.0 271.9" stroke="#c82c9b"/>
<path d="M739.8 266.4 L739.6 268.2 L739.4 270.1 L739.0 271.9 L738.7 273.8 L738.3 275.6 L737.9 277.5" stroke="#cd2c97"/>
<path d="M739.0 271.9 L738.7 273.8 L738.3 275.6 L737.9 277.5 L737.4 279.3 L736.9 281.2" stroke="#d12b93"/>
<path d="M737.9 277.5 L737.4 279.3 L736.9 281.2 L736.3 283.1 L735.7 284.9 L735.0 286.8" stroke="#d62b8f"/>
<path d="M736.9 281.2 L736.3 283.1 L735.7 284.9 L735.0 286.8 L734.4 288.7 L733.6 290.5 L732.8 292.4" stroke="#db2a8c"/>
<path d="M735.0 286.8 L734.4 288.7 L733.6 290.5 L732.8 292.4 L732.0 294.3 L731.2 296.1" stroke="#df2a88"/>
<path d="M732.8 292.4 L732.0 294.3 L731.2 296.1 L730.3 298.0 L729.3 299.8 L728.3 301.6" stroke="#e22a84"/>
<path d="M731.2 296.1 L730.3 298.0 L729.3 299.8 L728.3 301.6 L727.3 303.4 L726.2 305.2" stroke="#e42a81"/>
<path d="M728.3 301.6 L727.3 303.4 L726.2 305.2 L725.1 307.0 L724.0 308.8 L722.8 310.6" stroke="#e62a7e"/>
<path d="M726.2 305.2 L725.1 307.0 L724.0 308.8 L722.8 310.6 L721.6 312.3 L720.3 314.1" stroke="#e82a7b"/>
<path d="M722.8 310.6 L721.6 312.3 L720.3 314.1 L719.0 315.8 L717.6 317.5 L716.2 319.2" stroke="#ea2a77"/>
<path d="M720.3 314.1 L719.0 315.8 L717.6 317.5 L716.2 319.2 L714.7 320.8 L713.3 322.4" stroke="#ec2a74"/>
<path d="M716.2 319.2 L714.7 320.8 L713.3 322.4 L711.7 324.1 L710.2 325.6" stroke="#ee2a71"/>
<path d="M713.3 322.4 L711.7 324.1 L710.2 325.6 L708.5 327.2 L706.9 328.7 L705.2 330.3" stroke="#f02a6e"/>
<path d="M710.2 325.6 L708.5 327.2 L706.9 328.7 L705.2 330.3 L703.5 331.7 L701.7 333.2" stroke="#f22a6a"/>
<path d="M705.2 330.3 L703.5 331.7 L701.7 333.2 L699.9 334.6 L698.0 336.0" stroke="#f52a67"/>
<path d="M701.7 333.2 L699.9 334.6 L698.0 336.0 L696.5 337.3 L694.9 338.5 L693.4 339.7" stroke="#f72a64"/>
<path d="M698.0 336.0 L696.5 337.3 L694.9 338.5 L693.4 339.7 L691.8 340.9 L690.2 342.0 L688.6 343.1" stroke="#f92a61"/>
<path d="M693.4 339.7 L691.8 340.9 L690.2 342.0 L688.6 343.1 L687.0 344.1 L685.4 345.0" stroke="#f82a63"/>
<path d="M688.6 343.1 L687.0 344.1 L685.4 345.0 L683.7 345.9 L682.1 346.8 L680.5 347.6" stroke="#f62b68"/>
<path d="M685.4 345.0 L683.7 345.9 L682.1 346.8 L680.5 347.6 L678.9 348.3 L677.2 349.0 L675.6 349.7" stroke="#f42b6d"/>
<path d="M680.5 347.6 L678.9 348.3 L677.2 349.0 L675.6 349.7 L674.0 350.3 L672.4 350.8 L670.7 351.3" stroke="#f22c73"/>
<path d="M675.6 349.7 L674.0 350.3 L672.4 350.8 L670.7 351.3 L669.1 351.8 L667.5 352.1 L666.0 352.5" stroke="#f02d78"/>
<path d="M670.7 351.3 L669.1 351.8 L667.5 352.1 L666.0 352.5 L664.4 352.8 L662.8 353.0 L661.3 353.2 L659.7 353.3" stroke="#ee2d7d"/>
<path d="M666.0 352.5 L664.4 352.8 L662.8 353.0 L661.3 353.2 L659.7 353.3 L658.2 353.4 L656.7 353.4 L655.2 353.3" stroke="#ec2e83"/>
<path d="M659.7 353.3 L658.2 353.4 L656.7 353.4 L655.2 353.3 L653.8 353.2 L652.3 353.1 L650.9 352.9 L649.5 352.6" stroke="#ea2f88"/>
<path d="M655.2 353.3 L653.8 353.2 L652.3 353.1 L650.9 352.9 L649.5 352.6 L648.2 352.3 L646.8 351.9 L645.6 351.5" stroke="#e82f8d"/>
<path d="M649.5 352.6 L648.2 352.3 L646.8 351.9 L645.6 351.5 L644.3 351.0 L643.0 350.5 L641.8 349.9 L640.7 349.3" stroke="#e63094"/>
<path d="M645.6 351.5 L644.3 351.0 L643.0 350.5 L641.8 349.9 L640.7 349.3 L639.6 348.5 L638.5 347.8 L637.4 347.0 L636.4 346.1" stroke="#e2319c"/>
<path d="M640.7 349.3 L639.6 348.5 L638.5 347.8 L637.4 347.0 L636.4 346.1 L635.4 345.1 L634.5 344.1 L633.6 343.1 L632.8 342.0" stroke="#de32a4"/>
<path d="M636.4 346.1 L635.4 345.1 L634.5 344.1 L633.6 343.1 L632.8 342.0 L632.0 340.8 L631.3 339.6 L630.6 338.3 L630.0 336.9" stroke="#db33ac"/>
<path d="M632.8 342.0 L632.0 340.8 L631.3 339.6 L630.6 338.3 L630.0 336.9 L629.4 335.5 L628.9 334.0 L628.5 332.5" stroke="#d735b4"/>
<path d="M630.0 336.9 L629.4 335.5 L628.9 334.0 L628.5 332.5 L628.1 330.9 L627.7 329.2 L627.4 327.5" stroke="#d436bc"/>
<path d="M628.5 332.5 L628.1 330.9 L627.7 329.2 L627.4 327.5 L627.2 325.7 L627.1 323.9 L627.0 322.0" stroke="#d037c4"/>
<path d="M627.4 327.5 L627.2 325.7 L627.1 323.9 L627.0 322.0 L627.0 320.0 L627.0 318.1 L627.2 316.2" stroke="#cc38cc"/>
<path d="M627.0 322.0 L627.0 320.0 L627.0 318.1 L627.2 316.2 L627.5 314.4 L627.9 312.6 L628.4 310.9" stroke="#c939d4"/>
<path d="M627.2 316.2 L627.5 314.4 L627.9 312.6 L628.4 310.9 L629.0 309.2 L629.7 307.5 L630.5 305.9" stroke="#c939d6"/>
<path d="M628.4 310.9 L629.0 309.2 L629.7 307.5 L630.5 305.9 L631.4 304.3 L632.3 302.8" stroke="#ca39d5"/>
<path d="M630.5 305.9 L631.4 304.3 L632.3 302.8 L633.4 301.3 L634.6 299.9 L635.8 298.5" stroke="#cc38d3"/>
<path d="M632.3 302.8 L633.4 301.3 L634.6 299.9 L635.8 298.5 L637.1 297.2 L638.5 295.9 L640.0 294.7" stroke="#ce38d1"/>
<path d="M635.8 298.5 L637.1 297.2 L638.5 295.9 L640.0 294.7 L641.5 293.5 L643.2 292.4 L644.9 291.3" stroke="#d037cf"/>
<path d="M640.0 294.7 L641.5 293.5 L643.2 292.4 L644.9 291.3 L646.6 290.3 L648.5 289.3" stroke="#d237cd"/>
<path d="M644.9 291.3 L646.6 290.3 L648.5 289.3 L650.3 288.4 L652.3 287.5 L654.3 286.7" stroke="#d337cc"/>
<path d="M648.5 289.3 L650.3 288.4 L652.3 287.5 L654.3 286.7 L656.4 286.0 L658.5 285.3" stroke="#d536ca"/>
<path d="M654.3 286.7 L656.4 286.0 L658.5 285.3 L660.7 284.6 L662.9 284.0" stroke="#d736c8"/>
<path d="M658.5 285.3 L660.7 284.6 L662.9 284.0 L665.1 283.5 L667.4 283.0 L669.8 282.6" stroke="#d935c6"/>
<path d="M662.9 284.0 L665.1 283.5 L667.4 283.0 L669.8 282.6 L672.2 282.2 L674.6 281.9" stroke="#db35c4"/>
<path d="M669.8 282.6 L672.2 282.2 L674.6 281.9 L677.1 281.7 L679.5 281.5" stroke="#dc34c3"/>
<path d="M674.6 281.9 L677.1 281.7 L679.5 281.5 L682.1 281.4 L684.6 281.3" stroke="#de34c1"/>
<path d="M679.5 281.5 L682.1 281.4 L684.6 281.3 L687.2 281.3 L689.8 281.4" stroke="#e033be"/>
<path d="M684.6 281.3 L687.2 281.3 L689.8 281.4 L692.4 281.5 L695.0 281.7" stroke="#e232b7"/>
<path d="M689.8 281.4 L692.4 281.5 L695.0 281.7 L697.6 281.9 L700.3 282.3" stroke="#e332b1"/>
<path d="M695.0 281.7 L697.6 281.9 L700.3 282.3 L703.0 282.6 L705.6 283.1" stroke="#e531aa"/>
<path d="M700.3 282.3 L703.0 282.6 L705.6 283.1 L708.3 283.6 L711.0 284.2" stroke="#e730a4"/>
<path d="M705.6 283.1 L708.3 283.6 L711.0 284.2 L713.7 284.8 L716.4 285.5" stroke="#e82f9d"/>
<path d="M711.0 284.2 L713.7 284.8 L716.4 285.5 L719.0 286.3 L721.7 287.1" stroke="#ea2e97"/>
<path d="M716.4 285.5 L719.0 286.3 L721.7 287.1 L724.4 288.0 L727.0 289.0" stroke="#ec2e91"/>
<path d="M721.7 287.1 L724.4 288.0 L727.0 289.0 L729.6 290.1" stroke="#ee2d8a"/>
<path d="M727.0 289.0 L729.6 290.1 L732.3 291.2 L734.9 292.4" stroke="#ef2c84"/>
<path d="M729.6 290.1 L732.3 291.2 L734.9 292.4 L737.4 293.7 L740.0 295.0" stroke="#f12b7d"/>
<path d="M734.9 292.4 L737.4 293.7 L740.0 295.0 L741.5 296.1 L743.0 297.2 L744.4 298.5" stroke="#f32a77"/>
<path d="M740.0 295.0 L741.5 296.1 L743.0 297.2 L744.4 298.5 L745.7 299.8 L747.0 301.3" stroke="#f42a70"/>
<path d="M744.4 298.5 L745.7 299.8 L747.0 301.3 L748.3 302.8 L749.5 304.4 L750.6 306.0" stroke="#f5296b"/>
<path d="M747.0 301.3 L748.3 302.8 L749.5 304.4 L750.6 306.0 L751.7 307.8 L752.8 309.6 L753.8 311.5" stroke="#f62865"/>
<path d="M750.6 306.0 L751.7 307.8 L752.8 309.6 L753.8 311.5 L754.7 313.4 L755.6 315.5" stroke="#f72760"/>
<path d="M753.8 311.5 L754.7 313.4 L755.6 315.5 L756.5 317.5 L757.2 319.7" stroke="#f8265b"/>
<path d="M755.6 315.5 L756.5 317.5 L757.2 319.7 L758.0 321.9 L758.6 324.1 L759.3 326.4" stroke="#f92556"/>
<path d="M757.2 319.7 L758.0 321.9 L758.6 324.1 L759.3 326.4 L759.8 328.7 L760.3 331.1" stroke="#f92550"/>
<path d="M759.3 326.4 L759.8 328.7 L760.3 331.1 L760.8 333.5 L761.2 336.0" stroke="#fa244b"/>
<path d="M760.3 331.1 L760.8 333.5 L761.2 336.0 L761.5 338.5 L761.8 341.0" stroke="#fb2346"/>
<path d="M761.2 336.0 L761.5 338.5 L761.8 341.0 L762.1 343.5 L762.2 346.1" stroke="#fc2241"/>
<path d="M761.8 341.0 L762.1 343.5 L762.2 346.1 L762.3 348.7 L762.4 351.3" stroke="#fd213b"/>
<path d="M762.2 346.1 L762.3 348.7 L762.4 351.3 L762.4 353.9 L762.3 356.6" stroke="#fd2136"/>
<path d="M762.4 351.3 L762.4 353.9 L762.3 356.6 L762.2 359.2 L762.0 361.9" stroke="#fe2031"/>
<path d="M762.3 356.6 L762.2 359.2 L762.0 361.9 L761.8 364.6 L761.5 367.2" stroke="#ff232d"/>
<path d="M762.0 361.9 L761.8 364.6 L761.5 367.2 L761.1 369.9 L760.7 372.6" stroke="#ff2829"/>
<path d="M761.5 367.2 L761.1 369.9 L760.7 372.6 L760.2 375.2 L759.6 377.9" stroke="#ff2d25"/>
<path d="M760.7 372.6 L760.2 375.2 L759.6 377.9 L759.0 380.5 L758.4 383.1" stroke="#ff3221"/>
<path d="M759.6 377.9 L759.0 380.5 L758.4 383.1 L757.6 385.7 L756.8 388.3" stroke="#ff371d"/>
<path d="M758.4 383.1 L757.6 385.7 L756.8 388.3 L755.9 390.8 L755.0 393.4" stroke="#ff3b19"/>
<path d="M756.8 388.3 L755.9 390.8 L755.0 393.4 L754.0 395.9 L752.9 398.3" stroke="#ff4015"/>
<path d="M755.0 393.4 L754.0 395.9 L752.9 398.3 L751.8 400.8" stroke="#ff4511"/>
<path d="M752.9 398.3 L751.8 400.8 L750.6 403.1 L749.4 405.5" stroke="#ff4c0f"/>
<path d="M751.8 400.8 L750.6 403.1 L749.4 405.5 L748.0 407.8 L746.6 410.0" stroke="#ff530d"/>
<path d="M749.4 405.5 L748.0 407.8 L746.6 410.0 L745.2 412.2 L743.6 414.4" stroke="#ff5b0b"/>
<path d="M746.6 410.0 L745.2 412.2 L743.6 414.4 L742.0 416.5 L740.4 418.5" stroke="#ff6309"/>
<path d="M743.6 414.4 L742.0 416.5 L740.4 418.5 L738.6 420.5 L736.8 422.4" stroke="#ff6a07"/>
<path d="M740.4 418.5 L738.6 420.5 L736.8 422.4 L734.9 424.2 L733.0 426.0" stroke="#ff7205"/>
<path d="M736.8 422.4 L734.9 424.2 L733.0 426.0 L731.9 427.0 L730.7 427.9 L729.4 428.8 L728.2 429.8" stroke="#ff7a03"/>
<path d="M733.0 426.0 L731.9 427.0 L730.7 427.9 L729.4 428.8 L728.2 429.8 L726.8 430.7 L725.5 431.5 L724.1 432.4" stroke="#ff8201"/>
<path d="M728.2 429.8 L726.8 430.7 L725.5 431.5 L724.1 432.4 L722.7 433.3 L721.2 434.1 L719.7 434.9" stroke="#ff8900"/>
<path d="M724.1 432.4 L722.7 433.3 L721.2 434.1 L719.7 434.9 L718.1 435.7 L716.5 436.5 L714.9 437.3" stroke="#ff8d00"/>
<path d="M719.7 434.9 L718.1 435.7 L716.5 436.5 L714.9 437.3 L713.3 438.0 L711.6 438.7 L709.9 439.4" stroke="#ff9100"/>
<path d="M714.9 437.3 L713.3 438.0 L711.6 438.7 L709.9 439.4 L708.1 440.1 L706.3 440.8 L704.5 441.4" stroke="#ff9400"/>
<path d="M709.9 439.4 L708.1 440.1 L706.3 440.8 L704.5 441.4 L702.7 442.1 L700.9 442.7" stroke="#ff9800"/>
<path d="M704.5 441.4 L702.7 442.1 L700.9 442.7 L699.0 443.2 L697.1 443.8 L695.2 444.3" stroke="#ff9c00"/>
<path d="M700.9 442.7 L699.0 443.2 L697.1 443.8 L695.2 444.3 L693.2 444.9 L691.3 445.3 L689.3 445.8" stroke="#ffa000"/>
<path d="M695.2 444.3 L693.2 444.9 L691.3 445.3 L689.3 445.8 L687.3 446.3 L685.3 446.7" stroke="#ffa300"/>
<path d="M689.3 445.8 L687.3 446.3 L685.3 446.7 L683.2 447.1 L681.2 447.4 L679.1 447.8" stroke="#ffa700"/>
<path d="M685.3 446.7 L683.2 447.1 L681.2 447.4 L679.1 447.8 L677.0 448.1 L675.0 448.4" stroke="#ffab00"/>
<path d="M679.1 447.8 L677.0 448.1 L675.0 448.4 L672.9 448.7 L670.8 448.9 L668.6 449.1" stroke="#ffae00"/>
<path d="M675.0 448.4 L672.9 448.7 L670.8 448.9 L668.6 449.1 L666.5 449.3 L664.4 449.4" stroke="#ffb200"/>
<path d="M668.6 449.1 L666.5 449.3 L664.4 449.4 L662.2 449.6 L660.1 449.7 L658.0 449.7" stroke="#ffaf06"/>
<path d="M664.4 449.4 L662.2 449.6 L660.1 449.7 L658.0 449.7 L655.8 449.8 L653.7 449.8" stroke="#ffa811"/>
<path d="M658.0 449.7 L655.8 449.8 L653.7 449.8 L651.5 449.7 L649.4 449.7" stroke="#ffa01d"/>
<path d="M653.7 449.8 L651.5 449.7 L649.4 449.7 L647.2 449.6 L645.1 449.5 L642.9 449.3" stroke="#ff9928"/>
<path d="M649.4 449.7 L647.2 449.6 L645.1 449.5 L642.9 449.3 L640.8 449.2 L638.7 448.9" stroke="#ff9133"/>
<path d="M642.9 449.3 L640.8 449.2 L638.7 448.9 L636.6 448.7 L634.4 448.4 L632.3 448.1" stroke="#ff8a3f"/>
<path d="M638.7 448.9 L636.6 448.7 L634.4 448.4 L632.3 448.1 L630.2 447.7 L628.2 447.4" stroke="#ff824a"/>
<path d="M632.3 448.1 L630.2 447.7 L628.2 447.4 L626.1 446.9 L624.0 446.5 L622.0 446.0" stroke="#ff7b55"/>
<path d="M628.2 447.4 L626.1 446.9 L624.0 446.5 L622.0 446.0 L620.7 445.7 L619.3 445.4 L617.9 444.9" stroke="#ff7361"/>
<path d="M622.0 446.0 L620.7 445.7 L619.3 445.4 L617.9 444.9 L616.4 444.4 L614.9 443.9 L613.2 443.2" stroke="#ff6c6c"/>
<path d="M617.9 444.9 L616.4 444.4 L614.9 443.9 L613.2 443.2 L611.6 442.5 L609.9 441.8 L608.1 441.0" stroke="#fc6677"/>
<path d="M613.2 443.2 L611.6 442.5 L609.9 441.8 L608.1 441.0 L606.3 440.1 L604.4 439.1 L602.5 438.1" stroke="#f86083"/>
<path d="M608.1 441.0 L606.3 440.1 L604.4 439.1 L602.5 438.1 L600.6 437.1 L598.6 435.9" stroke="#f45b8e"/>
<path d="M602.5 438.1 L600.6 437.1 L598.6 435.9 L596.6 434.8 L594.6 433.5" stroke="#f0559a"/>
<path d="M598.6 435.9 L596.6 434.8 L594.6 433.5 L592.5 432.2 L590.4 430.9" stroke="#ec50a5"/>
<path d="M594.6 433.5 L592.5 432.2 L590.4 430.9 L588.3 429.5 L586.1 428.0" stroke="#e84bb0"/>
<path d="M590.4 430.9 L588.3 429.5 L586.1 428.0 L583.9 426.5 L581.7 425.0" stroke="#e445bc"/>
<path d="M586.1 428.0 L583.9 426.5 L581.7 425.0 L579.5 423.4 L577.2 421.7" stroke="#e040c7"/>
<path d="M581.7 425.0 L579.5 423.4 L577.2 421.7 L575.0 420.0 L572.7 418.2" stroke="#d641ca"/>
<path d="M577.2 421.7 L575.0 420.0 L572.7 418.2 L570.5 416.4 L568.2 414.6" stroke="#cd42cd"/>
<path d="M572.7 418.2 L570.5 416.4 L568.2 414.6 L565.9 412.7 L563.6 410.8" stroke="#c443cf"/>
<path d="M568.2 414.6 L565.9 412.7 L563.6 410.8 L561.3 408.8" stroke="#bb45d2"/>
<path d="M563.6 410.8 L561.3 408.8 L559.0 406.8 L556.7 404.7" stroke="#b146d5"/>
<path d="M561.3 408.8 L559.0 406.8 L556.7 404.7 L554.5 402.6 L552.2 400.5" stroke="#a847d7"/>
<path d="M556.7 404.7 L554.5 402.6 L552.2 400.5 L549.9 398.3 L547.7 396.1" stroke="#9f49da"/>
<path d="M552.2 400.5 L549.9 398.3 L547.7 396.1 L545.5 393.9" stroke="#964add"/>
<path d="M547.7 396.1 L545.5 393.9 L543.3 391.6 L541.1 389.3" stroke="#8c4bdf"/>
<path d="M545.5 393.9 L543.3 391.6 L541.1 389.3 L538.9 386.9" stroke="#834de2"/>
<path d="M541.1 389.3 L538.9 386.9 L536.7 384.5 L534.6 382.1" stroke="#7a4ee5"/>
<path d="M538.9 386.9 L536.7 384.5 L534.6 382.1 L532.5 379.7 L530.5 377.2" stroke="#714fe7"/>
<path d="M534.6 382.1 L532.5 379.7 L530.5 377.2 L528.4 374.7" stroke="#6852e8"/>
<path d="M530.5 377.2 L528.4 374.7 L526.4 372.2 L524.5 369.6" stroke="#5f55e9"/>
<path d="M528.4 374.7 L526.4 372.2 L524.5 369.6 L522.5 367.0 L520.7 364.4" stroke="#5658ea"/>
<path d="M524.5 369.6 L522.5 367.0 L520.7 364.4 L518.8 361.8" stroke="#4d5beb"/>
<path d="M520.7 364.4 L518.8 361.8 L517.0 359.1 L515.3 356.5" stroke="#455eeb"/>
<path d="M518.8 361.8 L517.0 359.1 L515.3 356.5 L513.6 353.8 L512.0 351.1" stroke="#3c62ec"/>
<path d="M515.3 356.5 L513.6 353.8 L512.0 351.1 L510.4 348.3" stroke="#3365ed"/>
<path d="M512.0 351.1 L510.4 348.3 L508.9 345.6 L507.4 342.8" stroke="#2a68ee"/>
<path d="M510.4 348.3 L508.9 345.6 L507.4 342.8 L506.0 340.0" stroke="#216bef"/>
<path d="M507.4 342.8 L506.0 340.0" stroke="#1a6ef0"/>
</g>
 <g fill="none" stroke="#fff" stroke-width="2.9"><circle cx="766.3" cy="452" r="11"/></g>
 <text x="766.8" y="457.6" font-family="Liberation Sans" font-weight="bold" font-size="15" fill="#fff" text-anchor="middle">R</text>
</svg>
</div>
<!-- crop frame -->
<svg class="a" style="left:470px;top:148px" width="363" height="363" viewBox="470 148 363 363">
 <g stroke="#fff" stroke-width="1" stroke-dasharray="1.5 1.5" fill="none" opacity="0.9">
  <rect x="477.5" y="155.5" width="348" height="348"/>
  <line x1="593.5" y1="155" x2="593.5" y2="504"/>
  <line x1="710.5" y1="155" x2="710.5" y2="504"/>
  <line x1="477" y1="271.5" x2="826" y2="271.5"/>
  <line x1="477" y1="387.5" x2="826" y2="387.5"/>
 </g>
 <g fill="#2eaadc" stroke="#06202c" stroke-width="1.4">
  <circle cx="477" cy="155" r="3.5"/><circle cx="651" cy="155" r="3.5"/><circle cx="826" cy="155" r="3.5"/>
  <circle cx="477" cy="329" r="3.5"/><circle cx="826" cy="329" r="3.5"/>
  <circle cx="477" cy="504" r="3.5"/><circle cx="651" cy="504" r="3.5"/><circle cx="826" cy="504" r="3.5"/>
 </g>
</svg>
<div class="a" style="left:637px;top:322.5px;width:30px;height:14px;background:rgba(235,235,245,0.6)"></div>
<div class="t" style="left:652px;top:327px;font-size:6px;color:#1a1a1a;transform:translateX(-50%)">616 x 616</div>


<div class="a" style="left:0;top:41px;width:217px;height:351px;overflow:hidden">
 <div class="a" style="left:0;top:0;width:217px;height:351px;filter:blur(4.5px)">
  <div class="a" style="left:30px;top:47px;width:14px;height:118px;background:#76683e"></div>
  <div class="a" style="left:50px;top:50px;width:26px;height:110px;background:#2d2d2d"></div>
  <div class="a" style="left:80px;top:72px;width:36px;height:6px;background:#303030"></div>
  <div class="a" style="left:76px;top:104px;width:52px;height:6px;background:#333"></div>
  <div class="a" style="left:90px;top:84px;width:20px;height:5px;background:#2e2e2e"></div>
  <div class="a" style="left:90px;top:128px;width:64px;height:6px;background:#333"></div>
  <div class="a" style="left:90px;top:152px;width:80px;height:6px;background:#333"></div>
  <div class="a" style="left:17px;top:160px;width:22px;height:14px;background:#36607e"></div>
  <div class="a" style="left:17px;top:176px;width:22px;height:12px;background:#6a5040"></div>
  <div class="a" style="left:17px;top:198px;width:22px;height:14px;background:#36607e"></div>
  <div class="a" style="left:17px;top:214px;width:22px;height:10px;background:#6a6040"></div>
  <div class="a" style="left:17px;top:228px;width:22px;height:14px;background:#36607e"></div>
  <div class="a" style="left:30px;top:246px;width:15px;height:36px;background:#74663e"></div>
  <div class="a" style="left:40px;top:282px;width:16px;height:68px;background:#74663e"></div>
  <div class="a" style="left:45px;top:165px;width:30px;height:60px;background:#303030"></div>
  <div class="a" style="left:60px;top:242px;width:92px;height:22px;background:#343434"></div>
  <div class="a" style="left:60px;top:268px;width:70px;height:82px;background:#363636"></div>
 </div>
</div>
<div class="a" style="left:217px;top:46px;width:7px;height:345px;background:#2f2f2f"></div>
<div class="a" style="left:217px;top:56px;width:7px;height:294px;background:#7a7a7a"></div>
<div class="a" style="left:0;top:391px;width:224px;height:2px;background:#1a1a1a"></div>
<svg class="a" style="left:0;top:41px" width="40" height="50" viewBox="0 41 40 50">
 <path d="M13.3 51.5 L15.5 53.7 L13.3 55.9 M13.3 64.4 L15.5 66.6 L13.3 68.8" fill="none" stroke="#8a8a8a" stroke-width="0.9"/>
 <path d="M23 49.6 h3.6 l0.8 0.9 h5 v6.6 h-9.4z" fill="#2e96d0"/><rect x="23" y="51.2" width="9.4" height="5.9" fill="#4cbcf0"/>
 <path d="M23 62.4 h3.6 l0.8 0.9 h5 v6.6 h-9.4z" fill="#8c929c"/><rect x="23" y="64" width="9.4" height="5.9" fill="#c4c8d0"/><rect x="25.7" y="66" width="4" height="2" fill="#8a9099"/>
</svg>
<div class="t" style="left:37px;top:50px;font-size:8px;color:#c4c4c4">Desktop</div>
<div class="t" style="left:37px;top:63px;font-size:8px;color:#c4c4c4">Documents</div>
<div class="a" style="left:10px;top:73px;width:161px;height:13px;background:#42a0e4"></div>
<svg class="a" style="left:0;top:73px" width="40" height="13" viewBox="0 73 40 13"><path d="M13.2 78.6 L15.4 80.8 L17.6 78.6" fill="none" stroke="#7cc0ee" stroke-width="0.9"/><path d="M23 75.6 h3.6 l0.8 0.9 h5 v6.6 h-9.4z" fill="#1a8a96"/><rect x="23" y="77.2" width="9.4" height="5.9" fill="#22a2a6"/><rect x="27.3" y="78.5" width="0.9" height="2.8" fill="#e0f0f0"/></svg>
<div class="t" style="left:37px;top:76px;font-size:8px;color:#fff">Downloads</div>


<div class="a" style="left:0;top:0;width:1250px;height:20px">
<svg class="a" style="left:7px;top:2px" width="16" height="16" viewBox="0 0 16 16"><circle cx="8.5" cy="7.3" r="4.1" fill="none" stroke="#cdcdcd" stroke-width="2.4"/><path d="M5.4 10.4 L2.6 13.2" stroke="#cdcdcd" stroke-width="2.8" stroke-linecap="round"/></svg>
<div class="sep" style="left:29px"></div>
<div class="t mi" style="left:37px">Viewer</div>
<div class="sep" style="left:70px"></div>
<div class="t mi" style="left:78px;color:#fff">Editor</div>
<div class="sep" style="left:110px"></div>
<div class="t mi" style="left:118px">Cut Out</div>
<div class="sep" style="left:159px"></div>
<div class="t mi" style="left:166px">Batch</div>
<div class="sep" style="left:197px"></div>
<div class="t mi" style="left:205px">Collage</div>
<div class="sep" style="left:242px"></div>
<div class="t mi" style="left:250px">Combine</div>
<div class="sep" style="left:293px"></div>
<div class="t mi" style="left:301px">Create GIF</div>
<div class="sep" style="left:351px"></div>
<div class="t mi" style="left:358px">Print</div>
<div class="sep" style="left:386px"></div>
<div class="t mi" style="left:394px">Tools</div>
</div>
<div class="a" style="left:0;top:20px;width:224px;height:21px">
<div class="t" style="left:5px;top:7px;font-size:7.7px;color:#3f8fd3">Folders</div>
<div class="a" style="left:35px;top:4px;width:1px;height:14px;background:#2e2e2e"></div>
<div class="t" style="left:41px;top:7px;font-size:7.7px;color:#bdbdbd">Favorites</div>
<div class="a" style="left:77px;top:4px;width:1px;height:14px;background:#2e2e2e"></div>
<div class="t" style="left:83px;top:7px;font-size:7.7px;color:#bdbdbd">Both</div>
</div>

<div id="bstrip" class="a"></div>
</body></html>
